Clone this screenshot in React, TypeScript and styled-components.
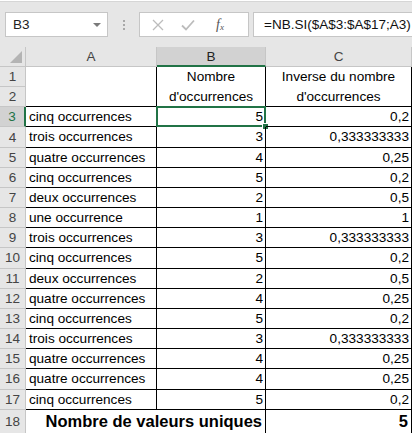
import React from 'react';
import styled, { createGlobalStyle, css } from 'styled-components';

const GlobalStyle = createGlobalStyle`
    html, body {
        margin: 0;
        padding: 0;
        background: #ffffff;
    }
    body {
        font-family: "Liberation Sans", Arial, sans-serif;
        overflow: hidden;
    }
`;

const GREEN = '#217346';

const Window = styled.div`
    width: 412px;
    height: 433px;
    overflow: hidden;
    background: #ffffff;
`;

const FormulaBar = styled.div`
    height: 46px;
    box-sizing: border-box;
    background: #e6e6e6;
    border-top: 1px solid #d6d6d6;
    display: flex;
    align-items: center;
    padding: 0 0 0 5px;
    margin-top: 1px;
`;

const NameBox = styled.div`
    width: 103px;
    height: 25px;
    box-sizing: border-box;
    background: #ffffff;
    border: 1px solid #c6c6c6;
    display: flex;
    align-items: center;
    justify-content: space-between;
    padding: 0 6px 0 7px;
    font-size: 13.5px;
    color: #222;
`;

const DropArrow = styled.span`
    width: 0;
    height: 0;
    border-left: 4px solid transparent;
    border-right: 4px solid transparent;
    border-top: 4px solid #7a7a7a;
    margin-top: 1px;
`;

const Grip = styled.div`
    width: 31px;
    display: flex;
    flex-direction: column;
    align-items: center;
    gap: 2px;
    span {
        width: 2px;
        height: 2px;
        background: #a8a8a8;
    }
`;

const FxBox = styled.div`
    width: 110px;
    height: 25px;
    box-sizing: border-box;
    background: #ffffff;
    border: 1px solid #c6c6c6;
    display: flex;
    align-items: center;
    padding: 0 0 0 12px;
    gap: 17px;
`;

const FxLabel = styled.span`
    font-family: "Liberation Serif", "Times New Roman", serif;
    font-style: italic;
    font-size: 14px;
    color: #555;
    margin-left: 4px;
    sub {
        font-size: 9px;
        vertical-align: -1px;
    }
`;

const FormulaInput = styled.div`
    flex: 1;
    height: 25px;
    box-sizing: border-box;
    margin-left: 4px;
    background: #ffffff;
    border: 1px solid #c6c6c6;
    border-right: none;
    display: flex;
    align-items: center;
    padding-left: 10px;
    font-size: 13.5px;
    color: #111;
    white-space: nowrap;
`;

const Sheet = styled.div`
    display: grid;
    grid-template-columns: 26px 131px 109px 146px;
    grid-template-rows: 20px repeat(17, 20.17px) 24px;
    font-size: 13.6px;
    color: #000;
`;

const HeadCell = styled.div<{ $selected?: boolean; $side: 'col' | 'row' }>`
    box-sizing: border-box;
    background: ${(p) => (p.$selected ? '#d2d2d2' : '#e6e6e6')};
    border-right: 1px solid #c6c6c6;
    border-bottom: 1px solid #c6c6c6;
    color: #444;
    display: flex;
    align-items: center;
    justify-content: center;
    font-size: 13.5px;
    ${(p) =>
        p.$selected &&
        p.$side === 'col' &&
        css`
            border-bottom: 2px solid ${GREEN};
            color: #222;
        `}
    ${(p) =>
        p.$selected &&
        p.$side === 'row' &&
        css`
            border-right: 2px solid ${GREEN};
            color: ${GREEN};
        `}
`;

const Corner = styled(HeadCell)`
    align-items: flex-end;
    justify-content: flex-end;
    padding: 0 3px 3px 0;
`;

const Cell = styled.div<{ $align?: 'left' | 'right' | 'center'; $bold?: boolean; $span?: number; $rows?: number }>`
    box-sizing: border-box;
    position: relative;
    border-right: 1px solid #000;
    border-bottom: 1px solid #000;
    padding: 0 2px 0 3px;
    line-height: 19px;
    white-space: nowrap;
    text-align: ${(p) => p.$align ?? 'left'};
    ${(p) => p.$span && css`grid-column: span ${p.$span};`}
    ${(p) => p.$rows && css`grid-row: span ${p.$rows};`}
    ${(p) =>
        p.$bold &&
        css`
            font-weight: bold;
            font-size: 16.5px;
            line-height: 23px;
            padding-right: 3px;
        `}
`;

const HeaderText = styled(Cell)`
    line-height: 20.17px;
    white-space: normal;
    padding: 0 2px;
`;

const ActiveCell = styled(Cell)`
    &::before {
        content: '';
        position: absolute;
        left: -1px;
        top: -1px;
        right: -1px;
        bottom: -1px;
        border: 2px solid ${GREEN};
        pointer-events: none;
    }
    &::after {
        content: '';
        position: absolute;
        right: -4px;
        bottom: -4px;
        width: 5px;
        height: 5px;
        background: ${GREEN};
        border: 1px solid #fff;
    }
`;

const rows: [string, number, string][] = [
    ['cinq occurrences', 5, '0,2'],
    ['trois occurrences', 3, '0,333333333'],
    ['quatre occurrences', 4, '0,25'],
    ['cinq occurrences', 5, '0,2'],
    ['deux occurrences', 2, '0,5'],
    ['une occurrence', 1, '1'],
    ['trois occurrences', 3, '0,333333333'],
    ['cinq occurrences', 5, '0,2'],
    ['deux occurrences', 2, '0,5'],
    ['quatre occurrences', 4, '0,25'],
    ['cinq occurrences', 5, '0,2'],
    ['trois occurrences', 3, '0,333333333'],
    ['quatre occurrences', 4, '0,25'],
    ['quatre occurrences', 4, '0,25'],
    ['cinq occurrences', 5, '0,2'],
];

const CrossIcon = () => (
    <svg width="12" height="12" viewBox="0 0 12 12">
        <path d="M1 1 L11 11 M11 1 L1 11" stroke="#bcbcbc" strokeWidth="1.3" fill="none" />
    </svg>
);

const CheckIcon = () => (
    <svg width="14" height="12" viewBox="0 0 14 12">
        <path d="M1 6.5 L5 10.5 L13 1.5" stroke="#bcbcbc" strokeWidth="1.8" fill="none" />
    </svg>
);

const App: React.FC = () => (
    <Window>
        <GlobalStyle />
        <FormulaBar>
            <NameBox>
                B3
                <DropArrow />
            </NameBox>
            <Grip>
                <span />
                <span />
                <span />
            </Grip>
            <FxBox>
                <CrossIcon />
                <CheckIcon />
                <FxLabel>
                    f<sub>x</sub>
                </FxLabel>
            </FxBox>
            <FormulaInput>=NB.SI($A$3:$A$17;A3)</FormulaInput>
        </FormulaBar>
        <Sheet>
            <Corner $side="col">
                <svg width="12" height="12" viewBox="0 0 12 12">
                    <polygon points="12,0 12,12 0,12" fill="#b4b4b4" />
                </svg>
            </Corner>
            <HeadCell $side="col">A</HeadCell>
            <HeadCell $side="col" $selected>
                B
            </HeadCell>
            <HeadCell $side="col">C</HeadCell>

            <HeadCell $side="row">1</HeadCell>
            <HeaderText $rows={2} />
            <HeaderText $rows={2} $align="center">
                Nombre d'occurrences
            </HeaderText>
            <HeaderText $rows={2} $align="center">
                Inverse du nombre d'occurrences
            </HeaderText>
            <HeadCell $side="row">2</HeadCell>

            {rows.map(([label, count, inverse], index) => {
                const rowNumber = index + 3;
                const active = rowNumber === 3;
                const CountCell = active ? ActiveCell : Cell;
                return (
                    <React.Fragment key={`row-${rowNumber}`}>
                        <HeadCell $side="row" $selected={active}>
                            {rowNumber}
                        </HeadCell>
                        <Cell>{label}</Cell>
                        <CountCell $align="right">{count}</CountCell>
                        <Cell $align="right">{inverse}</Cell>
                    </React.Fragment>
                );
            })}

            <HeadCell $side="row">18</HeadCell>
            <Cell $span={2} $align="right" $bold>
                Nombre de valeurs uniques
            </Cell>
            <Cell $align="right" $bold>
                5
            </Cell>
        </Sheet>
    </Window>
);

export default App;
